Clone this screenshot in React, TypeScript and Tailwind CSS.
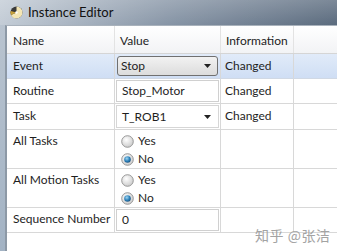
import React from "react";

const font = { fontFamily: 'Lato, "Noto Sans", "Liberation Sans", "Noto Sans CJK SC", sans-serif' };

function Radio({ checked }: { checked: boolean }) {
  return (
    <svg width="13" height="13" viewBox="0 0 13 13" className="shrink-0">
      <defs>
        <radialGradient id={checked ? "rc" : "ru"} cx="0.4" cy="0.35" r="0.7">
          <stop offset="0" stopColor="#ffffff" />
          <stop offset="1" stopColor="#c9c9c9" />
        </radialGradient>
        <radialGradient id="dot" cx="0.4" cy="0.35" r="0.7">
          <stop offset="0" stopColor="#9fd6f2" />
          <stop offset="0.6" stopColor="#2b7fb8" />
          <stop offset="1" stopColor="#1b4f79" />
        </radialGradient>
      </defs>
      <circle cx="6.5" cy="6.5" r="5.8" fill={`url(#${checked ? "rc" : "ru"})`} stroke="#8f8f8f" strokeWidth="0.9" />
      {checked && <circle cx="6.5" cy="6.5" r="3.3" fill="url(#dot)" />}
    </svg>
  );
}

function Caret() {
  return (
    <svg width="7" height="4" viewBox="0 0 7 4" className="shrink-0">
      <path d="M0 0 L7 0 L3.5 4 Z" fill="#222" />
    </svg>
  );
}

export default function App() {
  const cellBorder = "border-r border-[#d8d8d8]";
  return (
    <div className="w-[337px] h-[251px] overflow-hidden relative bg-gradient-to-r from-[#c3ccd6] via-[#8795a6] to-[#5b6b7e] text-[12px] text-[#1e1e1e] whitespace-nowrap" style={font}>
      {/* title bar */}
      <div className="h-[25px] flex items-center pl-[10px] gap-[5px] bg-gradient-to-b from-white/20 to-white/0">
        <svg width="13" height="13" viewBox="0 0 13 13">
          <circle cx="6.5" cy="6.5" r="6" fill="#3a3a3a" />
          <path d="M6.5 0.5 A6 6 0 0 1 6.5 12.5 A6 6 0 0 1 1 9 L6.5 6.5 Z" fill="#f4e6b4" />
          <path d="M6.5 6.5 L1 9 A6 6 0 0 1 0.6 5 Z" fill="#c9a23a" />
          <circle cx="6.5" cy="6.5" r="1.2" fill="#fff" />
        </svg>
        <span className="text-[13px] text-[#111]">Instance Editor</span>
      </div>
      <div className="flex h-[226px]">
        <div className="w-[5px] bg-gradient-to-b from-[#b8c3cf] to-[#a3b3c4]" />
        <div className="flex-1 bg-white border-l-2 border-t border-[#8d99a6] border-t-[#a9b2bc] flex flex-col">
          {/* header */}
          <div className="flex h-[28px] bg-gradient-to-b from-white to-[#f2f3f5] border-b border-[#d5d5d5]">
            <div className="w-[108px] border-r border-[#e3e3e3] pl-[6px] pt-[6px]">Name</div>
            <div className="w-[106px] border-r border-[#e3e3e3] pl-[5px] pt-[6px]">Value</div>
            <div className="w-[73px] border-r border-[#e3e3e3] pl-[5px] pt-[6px]">Information</div>
            <div className="flex-1" />
          </div>
          {/* Event */}
          <div className="flex h-[25px] bg-gradient-to-b from-[#e1ebf9] to-[#cfdef4] border-b border-[#d0d8e4]">
            <div className={`w-[108px] ${cellBorder} pl-[6px] pt-[3px]`}>Event</div>
            <div className={`w-[106px] ${cellBorder} px-[2px] py-[2px]`}>
              <div className="h-[20px] rounded-[3px] border border-[#707070] bg-gradient-to-b from-[#f2f2f2] to-[#dcdcdc] flex items-center justify-between pl-[3px] pr-[6px]">
                <span>Stop</span>
                <Caret />
              </div>
            </div>
            <div className={`w-[73px] ${cellBorder} pl-[4px] pt-[3px]`}>Changed</div>
            <div className="flex-1" />
          </div>
          {/* Routine */}
          <div className="flex h-[25px] border-b border-[#d8d8d8]">
            <div className={`w-[108px] ${cellBorder} pl-[6px] pt-[3px]`}>Routine</div>
            <div className={`w-[106px] ${cellBorder} px-[1px] py-[1px]`}>
              <div className="h-[22px] border border-[#d0d0d0] flex items-center pl-[5px]">Stop_Motor</div>
            </div>
            <div className={`w-[73px] ${cellBorder} pl-[4px] pt-[3px]`}>Changed</div>
            <div className="flex-1" />
          </div>
          {/* Task */}
          <div className="flex h-[26px] border-b border-[#d8d8d8]">
            <div className={`w-[108px] ${cellBorder} pl-[6px] pt-[3px]`}>Task</div>
            <div className={`w-[106px] ${cellBorder} px-[1px] py-[1px]`}>
              <div className="h-[23px] border border-[#d6d6d6] flex items-center justify-between pl-[5px] pr-[7px]">
                <span>T_ROB1</span>
                <Caret />
              </div>
            </div>
            <div className={`w-[73px] ${cellBorder} pl-[4px] pt-[3px]`}>Changed</div>
            <div className="flex-1" />
          </div>
          {/* All Tasks */}
          <div className="flex h-[39px] border-b border-[#d8d8d8]">
            <div className={`w-[108px] ${cellBorder} pl-[6px] pt-[2px]`}>All Tasks</div>
            <div className={`w-[106px] ${cellBorder} pl-[6px] pt-[3px] flex flex-col gap-[2px]`}>
              <div className="flex items-center gap-[4px] h-[16px]"><Radio checked={false} /><span>Yes</span></div>
              <div className="flex items-center gap-[4px] h-[16px]"><Radio checked={true} /><span>No</span></div>
            </div>
            <div className={`w-[73px] ${cellBorder}`} />
            <div className="flex-1" />
          </div>
          {/* All Motion Tasks */}
          <div className="flex h-[39px] border-b border-[#d8d8d8]">
            <div className={`w-[108px] ${cellBorder} pl-[6px] pt-[2px]`}>All Motion Tasks</div>
            <div className={`w-[106px] ${cellBorder} pl-[6px] pt-[3px] flex flex-col gap-[2px]`}>
              <div className="flex items-center gap-[4px] h-[16px]"><Radio checked={false} /><span>Yes</span></div>
              <div className="flex items-center gap-[4px] h-[16px]"><Radio checked={true} /><span>No</span></div>
            </div>
            <div className={`w-[73px] ${cellBorder}`} />
            <div className="flex-1" />
          </div>
          {/* Sequence Number */}
          <div className="flex h-[25px] border-b border-[#d8d8d8]">
            <div className={`w-[108px] ${cellBorder} pl-[6px] pt-[2px]`}>Sequence Number</div>
            <div className={`w-[106px] ${cellBorder} px-[1px] py-[1px]`}>
              <div className="h-[22px] border border-[#d0d0d0] flex items-center pl-[5px]">0</div>
            </div>
            <div className={`w-[73px] ${cellBorder}`} />
            <div className="flex-1" />
          </div>
          <div className="flex-1" />
        </div>
      </div>
      <div className="absolute left-[255px] top-[225px] text-[14px] text-[#a3a3a3] tracking-[0.5px]" style={{ fontFamily: '"Noto Sans CJK SC", sans-serif' }}>
        知乎 @张洁
      </div>
    </div>
  );
}
